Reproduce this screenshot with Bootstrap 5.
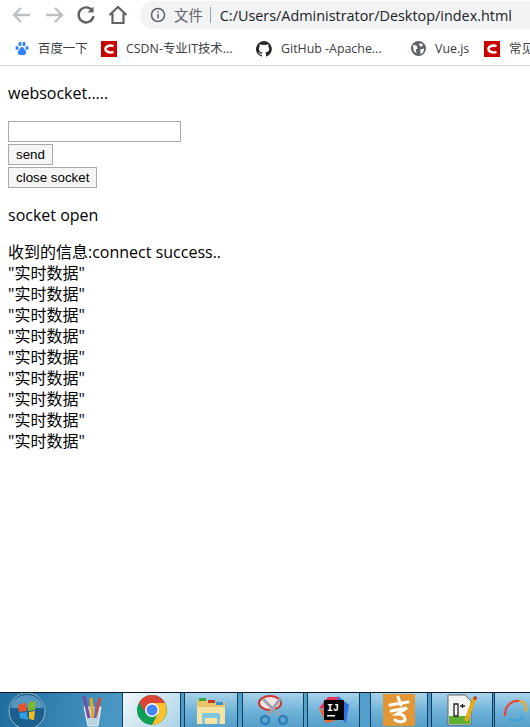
<!DOCTYPE html>
<html lang="en">
<head>
  <meta charset="UTF-8">
  <title>index.html</title>
  <link href="https://cdn.jsdelivr.net/npm/bootstrap@5.3.2/dist/css/bootstrap.min.css" rel="stylesheet">
  <style>
    html, body { height: 727px; overflow: hidden; }
    body { font-family: "Open Sans", "Noto Sans CJK SC", sans-serif; font-size: 16px; line-height: 21px; color: #000; background: #fff; }
    .shell { height: 727px; width: 530px; overflow: hidden; }
    .toolbar { height: 30px; flex: none; padding-left: 10px; white-space: nowrap; }
    .tool-btn { width: 24px; height: 24px; flex: none; margin-right: 8px; }
    .omnibox { height: 28px; flex: none; width: 400px; margin-left: 2px; padding-left: 10px; background: #f1f3f4; border-radius: 14px 0 0 14px; font-size: 14.4px; color: #5f6368; }
    .omni-sep { width: 1px; height: 16px; background: #9aa0a6; margin: 0 9px 0 7px; }
    .omni-url { color: #202124; }
    .bookmarks { height: 36px; flex: none; padding-top: 2px; border-bottom: 1px solid #d4d4d4; padding-left: 15px; font-size: 12.4px; color: #3c4043; white-space: nowrap; overflow: hidden; }
    .mark-item { flex: none; }
    .mark-item svg { flex: none; margin-right: 9px; }
    .page-main { flex: 1 1 auto; padding: 17px 8px 0; min-height: 0; }
    .page-main p { margin: 0 0 16px; }
    .plain-input { display: block; width: 173px; height: 21px; margin-top: 17px; border: 1px solid #a9a9a9; padding: 0; margin-bottom: 2px; background: #fff; }
    .plain-btn { display: block; height: 21px; padding: 0 7px; border: 1px solid #a9a9a9; border-radius: 0; background: #f5f5f5; font-family: "Liberation Sans", sans-serif; font-size: 13.33px; line-height: 18px; color: #000; margin-bottom: 2px; }
    .socket-state { margin-top: 17px !important; }
    .taskbar { height: 35px; flex: none; border-top: 1px solid #0c1c2c; background: linear-gradient(100deg, #1f6d9e 0%, #4a97c4 22%, #56a2cd 60%, #4893c2 100%); overflow: hidden; }
    .start-slot { width: 122px; flex: none; padding-left: 8px; gap: 33px; }
    .task-tile { flex: none; height: 34px; border-left: 1px solid #123f5f; border-right: 1px solid #123f5f; background: linear-gradient(180deg, #a8d3ea 0%, #6db1d8 55%, #559fcb 100%); }
    .task-tile.lit { background: linear-gradient(135deg, #f2f8fb 0%, #cfe5f0 50%, #a9d2e7 100%); }
    .tile-a { width: 59px; margin-right: 3px; }
    .tile-b { width: 54px; margin-right: 4px; }
    .tile-c { width: 62px; margin-right: 3px; }
    .tile-d { width: 53px; margin-right: 10px; }
    .tile-e { width: 58px; margin-right: 3px; }
    .tile-f { width: 62px; margin-right: 1px; }
    .tile-g { width: 40px; }
  </style>
</head>
<body>
  <div class="shell d-flex flex-column">
    <div class="toolbar d-flex align-items-center">
      <svg class="tool-btn" viewBox="0 0 24 24" fill="none" stroke="#bdc1c6" stroke-width="2.400"><path d="M20 12H5M11 5l-7 7 7 7"/></svg>
      <svg class="tool-btn" viewBox="0 0 24 24" fill="none" stroke="#bdc1c6" stroke-width="2.400"><path d="M4 12h15M13 5l7 7-7 7"/></svg>
      <svg class="tool-btn" viewBox="0 0 24 24" fill="none" stroke="#5f6368" stroke-width="2.400"><path d="M18.500 8A7.500 7.500 0 1 0 19.500 13"/><path d="M19.500 3.500v6h-6" fill="#5f6368" stroke="none"/></svg>
      <svg class="tool-btn" viewBox="0 0 24 24" fill="none" stroke="#5f6368" stroke-width="2.200"><path d="M3.500 12 12 4l8.500 8M6.500 10.500V20h11v-9.500"/></svg>
      <div class="omnibox d-flex align-items-center">
        <svg class="me-2" width="16" height="16" viewBox="0 0 16 16" fill="none" stroke="#5f6368" stroke-width="1.500"><circle cx="8" cy="8" r="6.500"/><path d="M8 7v4.500M8 4.200v1.600"/></svg>
        <span>文件</span><span class="omni-sep"></span><span class="omni-url">C:/Users/Administrator/Desktop/index.html</span>
      </div>
    </div>
    <div class="bookmarks d-flex align-items-center">
      <div class="mark-item d-flex align-items-center" style="width:86px">
        <svg width="14" height="15" viewBox="0 0 14 15" fill="#3385ff"><ellipse cx="2" cy="7" rx="1.600" ry="2"/><ellipse cx="5" cy="3" rx="1.600" ry="2.200"/><ellipse cx="9" cy="3" rx="1.600" ry="2.200"/><ellipse cx="12" cy="7" rx="1.600" ry="2"/><path d="M7 6c-2 0-2 2-3.500 3.500C2 11 3 14 5 14h4c2 0 3-3 1.500-4.500C9 8 9 6 7 6z"/></svg>
        <span>百度一下</span>
      </div>
      <div class="mark-item d-flex align-items-center" style="width:155px">
        <svg width="16" height="16" viewBox="0 0 16 16"><rect width="16" height="16" fill="#c80000"/><path d="M12.500 5.200C9 3.800 4.500 5 4.500 8s4.500 4.200 8 2.800" fill="none" stroke="#fff" stroke-width="2.500"/></svg>
        <span>CSDN-专业IT技术...</span>
      </div>
      <div class="mark-item d-flex align-items-center" style="width:155px">
        <svg width="16" height="16" viewBox="0 0 16 16" fill="#24292e"><path d="M8 0a8 8 0 0 0-2.500 15.600c.4.100.5-.2.500-.4v-1.400c-2.200.5-2.700-1-2.700-1-.4-.9-.9-1.200-.9-1.200-.7-.5.100-.5.100-.5.800.1 1.200.8 1.200.8.700 1.200 1.900.9 2.300.7.100-.5.300-.9.500-1.100-1.800-.2-3.600-.9-3.600-4 0-.9.300-1.600.8-2.100-.1-.2-.4-1 .1-2.100 0 0 .7-.2 2.200.8a7.600 7.600 0 0 1 4 0c1.500-1 2.200-.8 2.200-.8.500 1.100.2 1.900.1 2.100.5.600.8 1.300.8 2.100 0 3.100-1.900 3.700-3.700 3.900.3.300.6.800.6 1.500v2.200c0 .2.100.5.600.4A8 8 0 0 0 8 0z"/></svg>
        <span>GitHub -Apache...</span>
      </div>
      <div class="mark-item d-flex align-items-center" style="width:73px">
        <svg width="15" height="15" viewBox="0 0 16 16"><circle cx="8" cy="8" r="8" fill="#5f6368"/><path d="M2 4l4 1 1 3-2 1 1 4-3-2zM9 2l4 2-2 2-2-1zM10 9l4-1-1 4-3 2z" fill="#fff"/></svg>
        <span>Vue.js</span>
      </div>
      <div class="mark-item d-flex align-items-center">
        <svg width="16" height="16" viewBox="0 0 16 16"><rect width="16" height="16" fill="#c80000"/><path d="M12.500 5.200C9 3.800 4.500 5 4.500 8s4.500 4.200 8 2.800" fill="none" stroke="#fff" stroke-width="2.500"/></svg>
        <span>常见</span>
      </div>
    </div>
    <div class="page-main">
      <p class="mb-0">websocket.....</p>
      <input class="plain-input" type="text">
      <button class="plain-btn" type="button">send</button>
      <button class="plain-btn" type="button">close socket</button>
      <p class="socket-state">socket open</p>
      <div>收到的信息:connect success..</div>
      <div>"实时数据"</div>
      <div>"实时数据"</div>
      <div>"实时数据"</div>
      <div>"实时数据"</div>
      <div>"实时数据"</div>
      <div>"实时数据"</div>
      <div>"实时数据"</div>
      <div>"实时数据"</div>
      <div>"实时数据"</div>
    </div>
    <div class="taskbar d-flex">
      <div class="start-slot d-flex align-items-center">
        <svg width="38" height="35" viewBox="0 0 38 35"><circle cx="19" cy="18" r="18" fill="#1c5f8e" stroke="#8fb7cf"/><path d="M3 15a16 13 0 0 1 32 0z" fill="#7fbcdf" opacity=".6"/><path d="M10 12l8-2 1 8-8 1z" fill="#e8532a"/><path d="M20 10l8-2-1 9-7 1z" fill="#7cb82f"/><path d="M11 20l8-1 1 8-8-2z" fill="#2f9fe0"/><path d="M21 19l6-1-1 9-5-1z" fill="#f6be1a"/></svg>
        <svg width="26" height="33" viewBox="0 0 26 33"><path d="M5 13h17l-3 19H9z" fill="#b9d4e2" stroke="#e8f2f7"/><path d="M5 2l5 22" stroke="#7a4a9e" stroke-width="3"/><path d="M12 4l2 20" stroke="#e8a917" stroke-width="3"/><path d="M21 4l-5 20" stroke="#d8482a" stroke-width="3"/><path d="M17 8l-1 16" stroke="#5c6fc0" stroke-width="2"/></svg>
      </div>
      <div class="task-tile tile-a lit d-flex align-items-center justify-content-center">
        <svg width="30" height="30" viewBox="0 0 30 30"><circle cx="15" cy="15" r="15" fill="#0f9d58"/><path d="M15 0A15 15 0 0 0 2 7.500L9 18.500 15 8h13A15 15 0 0 0 15 0z" fill="#db4437"/><path d="M28 8H15l6 10.500L15 30A15 15 0 0 0 28 8z" fill="#fbc02d"/><circle cx="15" cy="15" r="7" fill="#fff"/><circle cx="15" cy="15" r="5.500" fill="#4285f4"/></svg>
      </div>
      <div class="task-tile tile-b d-flex align-items-center justify-content-center">
        <svg width="32" height="30" viewBox="0 0 32 30"><path d="M2 5h12l2 2h14v22H2z" fill="#e8c56b"/><rect x="4" y="3" width="7" height="3" fill="#3fa33f"/><rect x="13" y="5" width="7" height="3" fill="#c0392b"/><rect x="21" y="7" width="7" height="3" fill="#3b8fd6"/><path d="M2 12h28v17H2z" fill="#f7e3a3"/><path d="M7 29v-9a2 2 0 0 1 2-2h14a2 2 0 0 1 2 2v9h-3v-6H10v6z" fill="#7fc6e0"/></svg>
      </div>
      <div class="task-tile tile-c d-flex align-items-center justify-content-center">
        <svg width="30" height="32" viewBox="0 0 30 32"><ellipse cx="12" cy="9" rx="11" ry="7" fill="#f3e3e0" stroke="#c33" stroke-width="2"/><path d="M5 5l17 17M23 4 9 22" stroke="#9aa4ad" stroke-width="3"/><circle cx="7" cy="26" r="4" fill="none" stroke="#2d7fb8" stroke-width="2.500"/><circle cx="25" cy="26" r="4" fill="none" stroke="#2d7fb8" stroke-width="2.500"/></svg>
      </div>
      <div class="task-tile tile-d d-flex align-items-center justify-content-center">
        <svg width="32" height="32" viewBox="0 0 32 32"><path d="M1 14 10 3h11l-1 14z" fill="#e5315a"/><path d="M20 2l11 9-3 18-10-9z" fill="#2f6fe0"/><path d="M1 14l7 15 14-4z" fill="#f26522"/><rect x="6" y="6" width="20" height="20" fill="#000"/><rect x="9" y="21" width="8" height="1.500" fill="#fff"/><text x="9" y="17" font-family="Liberation Mono, monospace" font-size="10" font-weight="700" fill="#fff">IJ</text></svg>
      </div>
      <div class="task-tile tile-e d-flex align-items-center justify-content-center">
        <svg width="32" height="32" viewBox="0 0 32 32"><rect width="32" height="32" fill="#e39636"/><path d="M15 3l3 8M7 11l18-3M8 17l16-3-10 6c5 0 8 2 8 5s-6 4-10 1" fill="none" stroke="#fff" stroke-width="3" stroke-linecap="round"/></svg>
      </div>
      <div class="task-tile tile-f d-flex align-items-center justify-content-center">
        <svg width="32" height="32" viewBox="0 0 32 32"><path d="M2 1h17l6 6v24H2z" fill="#f4f6f4" stroke="#666"/><rect x="3" y="22" width="21" height="8" fill="#5fb02f"/><path d="M8 10v12h4V10zM14 12h5M16.500 10v4" fill="none" stroke="#222" stroke-width="1.300"/><path d="M29 3 20 27" stroke="#e8a917" stroke-width="4"/><path d="M29 2l2 1-1 3-3-1z" fill="#a33"/></svg>
      </div>
      <div class="task-tile tile-g d-flex align-items-center ps-2">
        <svg width="40" height="32" viewBox="0 0 40 32" fill="none" stroke-width="3"><path d="M3 24C1 12 12 2 22 4" stroke="#e5483a"/><path d="M22 4c8 1 10 8 8 14" stroke="#f2a81d"/><path d="M8 28c6 3 14 3 20-3" stroke="#3f9fd6"/></svg>
      </div>
    </div>
  </div>
</body>
</html>
